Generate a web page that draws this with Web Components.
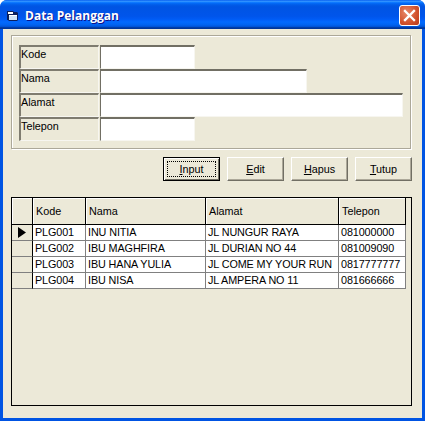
<!DOCTYPE html>
<html><head><meta charset="utf-8"><style>
html,body{margin:0;padding:0;background:#fff}
body{font:10.8px "Liberation Sans",Arial,sans-serif;width:425px;height:421px;overflow:hidden}
</style></head><body>
<xp-window title="Data Pelanggan">
  <xp-group>
    <xp-field label="Kode" width="95"></xp-field>
    <xp-field label="Nama" width="207"></xp-field>
    <xp-field label="Alamat" width="303"></xp-field>
    <xp-field label="Telepon" width="95" last></xp-field>
  </xp-group>
  <div style="display:flex;gap:7px;justify-content:flex-end;padding:8px 0 0 0">
    <xp-button key="I" rest="nput" default></xp-button>
    <xp-button key="E" rest="dit"></xp-button>
    <xp-button key="H" rest="apus"></xp-button>
    <xp-button key="T" rest="utup"></xp-button>
  </div>
  <xp-grid></xp-grid>
</xp-window>
<script>
function make(name, html, init){
  customElements.define(name, class extends HTMLElement{
    connectedCallback(){
      if(this.shadowRoot) return;
      const s=this.attachShadow({mode:'open'});
      s.innerHTML=typeof html==='function'?html(this):html;
      if(init) init(this,s);
    }
  });
}
make('xp-window', el=>`<style>
:host{display:flex;flex-direction:column;width:425px;height:421px;box-sizing:border-box;border-radius:7px 7px 0 0;overflow:hidden;background:#0054e3}
.bar{height:29px;flex:none;display:flex;align-items:center;padding:2px 5px 0 7px;box-sizing:border-box;
background:linear-gradient(180deg,#0058ee 0%,#3593ff 4%,#288eff 6%,#127dff 8%,#036ffc 10%,#0262ee 14%,#0057e5 20%,#0054e3 24%,#0055eb 56%,#005bf5 66%,#026afe 76%,#0062ef 86%,#0052d6 92%,#0040ab 94%,#003092 100%)}
.ico{width:11px;height:10px;flex:none;margin-right:7px}
.t{flex:1;color:#fff;font:bold 12px "Open Sans","Liberation Sans",sans-serif;text-shadow:1px 1px 0 #0f1089}
.x{width:21px;height:21px;flex:none;box-sizing:border-box;border:1px solid #fff;border-radius:3px;background:radial-gradient(circle at 35% 35%,#e8896a,#d1512c 60%,#b83a1a);display:flex;align-items:center;justify-content:center}
.frame{flex:1;margin:0 3px 3px 3px;background:#ece9d8;padding:6px 10px 0 8px;box-sizing:border-box;min-height:0;display:flex;flex-direction:column}
</style>
<div class="bar">
<svg class="ico" viewBox="0 0 11 10"><path d="M0 0h6l1 1h3l1 1v7l-1 1H2L1 9H0z" fill="#0b1f5c"/><path d="M1 1h5v2H1z" fill="#fff"/><path d="M2 4h8v5H2z" fill="#cfe3f6"/><path d="M2 4h8v1H2z" fill="#fff"/></svg>
<span class="t">${el.getAttribute('title')}</span>
<span class="x"><svg width="15" height="15" viewBox="0 0 15 15"><path d="M3 3l9 9M12 3l-9 9" stroke="#fff" stroke-width="2.3" stroke-linecap="square"/></svg></span>
</div>
<div class="frame"><slot></slot></div>`);
make('xp-group',`<style>
:host{display:block;height:114px;margin-right:1px;box-sizing:border-box;border:1px solid #aca899;box-shadow:inset 1px 1px 0 #fff,1px 1px 0 #fff;padding:9px 0 0 7px}
</style><slot></slot>`);
make('xp-field', el=>`<style>
:host{display:flex;gap:0;height:24px;box-sizing:border-box}
.l{width:80px;height:24px;box-sizing:border-box;border:solid;border-width:2px 1px 1px 2px;border-color:#7f7c70 #f7f6f0 #f7f6f0 #7f7c70;line-height:15px;color:#000}
.i{width:${el.getAttribute('width')}px;height:24px;box-sizing:border-box;margin-left:1px;background:#fff;border:solid;border-width:2px 1px 1px 1px;border-color:#716f64 #f7f6f0 #f7f6f0 #716f64}
</style><div class="l">${el.getAttribute('label')}</div><div class="i"></div>`);
make('xp-button', el=>{const d=el.hasAttribute('default');return `<style>
:host{display:block;width:57px;height:24px}
.b{height:24px;box-sizing:border-box;background:#ece9d8;display:flex;align-items:center;justify-content:center;color:#000;position:relative;
border:1px solid;border-color:#fff #716f64 #716f64 #fff;box-shadow:inset -1px -1px 0 #aca899}
.d{border:1px solid #000;box-shadow:inset 1px 1px 0 #fff,inset -1px -1px 0 #716f64}
.d .f{position:absolute;inset:3px;border:1px dotted #000}
u{text-decoration:underline}
</style><div class="b ${d?'d':''}">${d?'<i class="f"></i>':''}<span><u>${el.getAttribute('key')}</u>${el.getAttribute('rest')}</span></div>`});
const heads=['Kode','Nama','Alamat','Telepon'];
const rows=[['PLG001','INU NITIA','JL NUNGUR RAYA','081000000'],['PLG002','IBU MAGHFIRA','JL DURIAN NO 44','081009090'],['PLG003','IBU HANA YULIA','JL COME MY YOUR RUN','0817777777'],['PLG004','IBU NISA','JL AMPERA NO 11','081666666']];
make('xp-grid',`<style>
:host{display:block;margin-top:16px;width:401px;height:209px;box-sizing:border-box;border:1px solid #000;background:#ece9d8}
.g{display:grid;grid-template-columns:21px 53px 120px 133px 67px 1px;grid-template-rows:27px repeat(4,16px);width:max-content}
.c{box-sizing:border-box;border-right:1px solid #000;border-bottom:1px solid #000;white-space:nowrap;overflow:hidden}
.h{padding:6px 0 0 3px;line-height:14px;box-shadow:inset 1px 1px 0 #fff}
.f{border-color:#000 #000 #808080 #000}
.d{background:#fff;border-color:#808080;padding-left:2px;line-height:15px;letter-spacing:-.1px}
.p{display:flex;align-items:center;justify-content:center}
</style><div class="g">
<div class="c h"></div>${heads.map(h=>`<div class="c h">${h}</div>`).join('')}<div></div>
${rows.map((r,i)=>`<div class="c f p">${i==0?'<svg width="8" height="11" viewBox="0 0 8 11"><path d="M0 0l8 5.5L0 11z" fill="#000"/></svg>':''}</div>${r.map(v=>`<div class="c d">${v}</div>`).join('')}<div></div>`).join('')}
</div>`);
</script>
</body></html>
